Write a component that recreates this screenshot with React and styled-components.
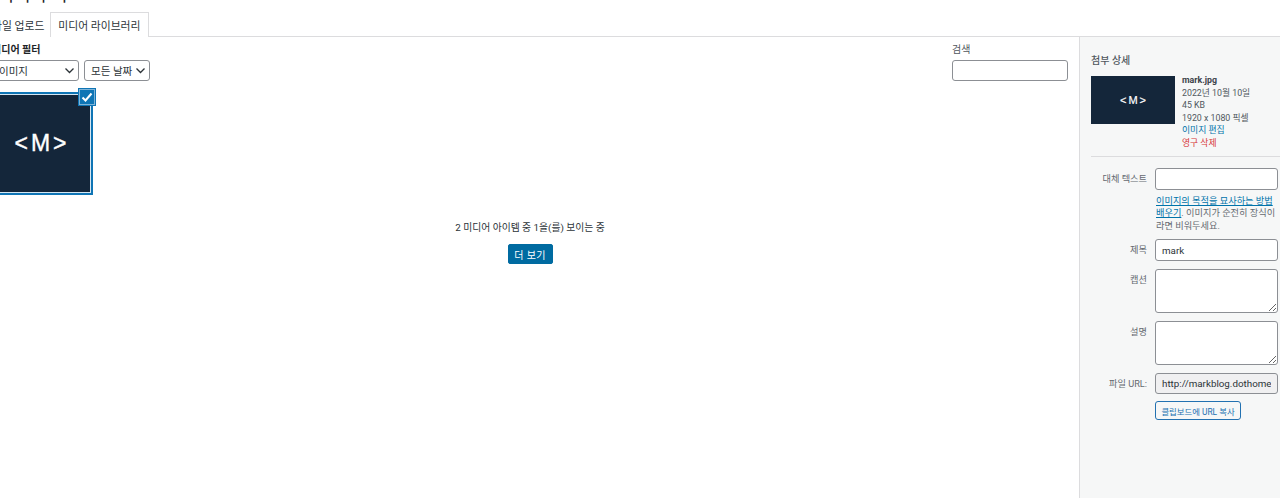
import React from 'react';
import styled, { createGlobalStyle } from 'styled-components';

const GlobalStyle = createGlobalStyle`
  html, body {
    margin: 0;
    height: 100%;
    overflow: hidden;
    background: #fff;
  }
  body {
    font-family: Roboto, "Noto Sans CJK KR", sans-serif;
    font-size: 11px;
    color: #2c3338;
  }
`;

const Page = styled.div`
  width: 1299px;
  height: 498px;
  margin-left: -19px;
  display: flex;
  flex-direction: column;
  overflow: hidden;
`;

const Title = styled.h1`
  margin: -18px 0 0;
  height: 30px;
  font-size: 18px;
  line-height: 26px;
  font-weight: 400;
  color: #1d2327;
`;

const Tabs = styled.div`
  display: flex;
  box-sizing: border-box;
  height: 25px;
  padding-left: 4px;
  border-bottom: 1px solid #dcdcde;
`;

const Tab = styled.div`
  display: flex;
  align-items: center;
  padding: 0 ${(props) => (props.$active ? '7px' : '5px')} 0 ${(props) => (props.$active ? '7px' : '6px')};
  height: 25px;
  box-sizing: border-box;
  font-size: 10.8px;
  color: #2c3338;
  background: #fff;
  border: 1px solid ${(props) => (props.$active ? '#dcdcde' : 'transparent')};
  border-bottom: 0;
`;

const Body = styled.div`
  flex: 1;
  display: flex;
  min-height: 0;
`;

const Browser = styled.main`
  flex: 1;
  min-width: 0;
  display: flex;
  flex-direction: column;
`;

const Toolbar = styled.div`
  display: flex;
  justify-content: space-between;
  padding: 6px 11px 0 11px;
`;

const FilterLabel = styled.div`
  font-size: 10px;
  line-height: 14px;
  font-weight: 700;
  color: #1d2327;
  margin-bottom: 3px;
`;

const SearchLabel = styled(FilterLabel)`
  font-weight: 400;
  color: #50575e;
`;

const FilterRow = styled.div`
  display: flex;
  gap: 5px;
`;

const Select = styled.div`
  display: flex;
  align-items: center;
  justify-content: space-between;
  box-sizing: border-box;
  width: ${(props) => props.$width}px;
  height: 21px;
  padding: 0 3px 0 6px;
  border: 1px solid #8c8f94;
  border-radius: 3px;
  font-size: 10.5px;
  white-space: nowrap;
  color: #2c3338;
  background: #fff;
`;

const SearchInput = styled.input`
  display: block;
  box-sizing: border-box;
  width: 116px;
  height: 21px;
  border: 1px solid #8c8f94;
  border-radius: 3px;
  background: #fff;
  outline: none;
`;

const Grid = styled.div`
  padding: 13px 0 0 0;
  height: 111px;
`;

const Attachment = styled.div`
  position: relative;
  box-sizing: border-box;
  width: 110px;
  height: 99px;
  background: #14263a;
  border: 1px solid #d5e6f2;
  outline: 2px solid #0f75b5;
  display: flex;
  align-items: center;
  justify-content: center;
`;

const Logo = styled.span`
  display: flex;
  align-items: center;
  gap: ${(props) => props.$gap}px;
  padding-left: ${(props) => props.$shift}px;
  color: #fff;
  font-family: "Liberation Sans", Arial, sans-serif;
  font-size: ${(props) => props.$size}px;
  line-height: 1;
`;

const LogoMark = styled.span`
  font-weight: 400;
  -webkit-text-stroke: ${(props) => props.$stroke}px #fff;
`;

const Check = styled.div`
  position: absolute;
  top: -7px;
  right: -6px;
  box-sizing: border-box;
  width: 18px;
  height: 18px;
  display: flex;
  align-items: center;
  justify-content: center;
  background: #0f75b5;
  border: 1px solid #0f75b5;
  box-shadow: inset 0 0 0 1px #7fb4d8;
`;

const LoadMore = styled.div`
  display: flex;
  flex-direction: column;
  align-items: center;
  gap: 9px;
  margin-top: 16px;
`;

const CountText = styled.p`
  margin: 0;
  font-size: 9.8px;
  line-height: 14px;
  color: #2c3338;
`;

const PrimaryButton = styled.button`
  box-sizing: border-box;
  width: 45px;
  height: 20px;
  padding: 0;
  border: 1px solid #006ba1;
  border-radius: 2px;
  background: #006ba1;
  color: #fff;
  font-family: inherit;
  font-size: 10px;
  letter-spacing: 0.3px;
`;

const Sidebar = styled.aside`
  box-sizing: border-box;
  width: 201px;
  background: #f6f7f7;
  border-left: 1px solid #dcdcde;
  padding: 17px 2px 0 11px;
`;

const SideHeading = styled.h2`
  margin: 0 0 8px;
  font-size: 10px;
  line-height: 14px;
  font-weight: 500;
  color: #50575e;
`;

const Details = styled.div`
  display: flex;
  gap: 7px;
  margin-right: -2px;
  padding-bottom: 6px;
  border-bottom: 1px solid #dcdcde;
`;

const Thumb = styled.div`
  width: 84px;
  height: 48px;
  flex: none;
  background: #14263a;
  display: flex;
  align-items: center;
  justify-content: center;
`;

const Info = styled.div`
  margin-top: -2px;
  font-size: 8.8px;
  line-height: 12.6px;
  color: #50575e;
`;

const FileName = styled.div`
  font-weight: 700;
  color: #3c434a;
`;

const InfoLink = styled.div`
  color: ${(props) => (props.$danger ? '#d63638' : '#0073aa')};
`;

const Fields = styled.div`
  display: flex;
  flex-direction: column;
  padding-top: 11px;
`;

const Field = styled.div`
  display: grid;
  grid-template-columns: 56px 123px;
  column-gap: 8px;
  margin-bottom: ${(props) => (props.$tight ? 7 : 8)}px;
`;

const FieldLabel = styled.label`
  text-align: right;
  font-size: 9.2px;
  line-height: 14px;
  padding-top: 4px;
  color: #646970;
`;

const TextInput = styled.input`
  display: block;
  box-sizing: border-box;
  width: 123px;
  height: ${(props) => props.$height || 22}px;
  padding: 0 6px;
  border: 1px solid #8c8f94;
  border-radius: 3px;
  background: ${(props) => (props.$muted ? '#f0f0f1' : '#fff')};
  color: #2c3338;
  font-family: inherit;
  font-size: 9.8px;
  outline: none;
`;

const TextArea = styled.textarea`
  display: block;
  box-sizing: border-box;
  width: 123px;
  height: 44px;
  border: 1px solid #8c8f94;
  border-radius: 3px;
  background: #fff;
  outline: none;
  resize: vertical;
`;

const Help = styled.p`
  grid-column: 2;
  margin: 5px 0 0;
  padding-left: 1px;
  font-size: 9.2px;
  line-height: 12.6px;
  color: #646970;
  word-break: break-all;
  a {
    color: #0073aa;
    text-decoration: underline;
  }
`;

const CopyButton = styled.button`
  grid-column: 2;
  box-sizing: border-box;
  width: 86px;
  height: 19px;
  margin-top: 7px;
  padding: 0;
  border: 1px solid #2271b1;
  border-radius: 3px;
  background: #f6f7f7;
  color: #2271b1;
  font-family: inherit;
  font-size: 8.4px;
  white-space: nowrap;
`;

const Chevron = () => (
  <svg width="11" height="11" viewBox="0 0 11 11" fill="none" stroke="#2c3338" strokeWidth="1.3">
    <path d="M1.5 3.5 L5.5 7.5 L9.5 3.5" />
  </svg>
);

const CheckMark = () => (
  <svg width="12" height="12" viewBox="0 0 12 12" fill="none" stroke="#fff" strokeWidth="2">
    <path d="M1.5 6.5 L4.5 9.5 L10.5 2.5" />
  </svg>
);

export default function App() {
  return (
    <Page>
      <GlobalStyle />
      <Title>미디어 추가</Title>
      <Tabs>
        <Tab>파일 업로드</Tab>
        <Tab $active>미디어 라이브러리</Tab>
      </Tabs>
      <Body>
        <Browser>
          <Toolbar>
            <div>
              <FilterLabel>미디어 필터</FilterLabel>
              <FilterRow>
                <Select $width={87}>
                  이미지
                  <Chevron />
                </Select>
                <Select $width={66}>
                  모든 날짜
                  <Chevron />
                </Select>
              </FilterRow>
            </div>
            <div>
              <SearchLabel>검색</SearchLabel>
              <SearchInput readOnly />
            </div>
          </Toolbar>
          <Grid>
            <Attachment>
              <Logo $size={23} $gap={3} $shift={9}>
                <LogoMark $stroke={0.4}>&lt;</LogoMark>
                <LogoMark $stroke={0.4}>M</LogoMark>
                <LogoMark $stroke={0.4}>&gt;</LogoMark>
              </Logo>
              <Check>
                <CheckMark />
              </Check>
            </Attachment>
          </Grid>
          <LoadMore>
            <CountText>2 미디어 아이템 중 1을(를) 보이는 중</CountText>
            <PrimaryButton>더 보기</PrimaryButton>
          </LoadMore>
        </Browser>
        <Sidebar>
          <SideHeading>첨부 상세</SideHeading>
          <Details>
            <Thumb>
              <Logo $size={11} $gap={2} $shift={0}>
                <LogoMark $stroke={0.2}>&lt;</LogoMark>
                <LogoMark $stroke={0.2}>M</LogoMark>
                <LogoMark $stroke={0.2}>&gt;</LogoMark>
              </Logo>
            </Thumb>
            <Info>
              <FileName>mark.jpg</FileName>
              <div>2022년 10월 10일</div>
              <div>45 KB</div>
              <div>1920 x 1080 픽셀</div>
              <InfoLink>이미지 편집</InfoLink>
              <InfoLink $danger>영구 삭제</InfoLink>
            </Info>
          </Details>
          <Fields>
            <Field $tight>
              <FieldLabel>대체 텍스트</FieldLabel>
              <TextInput readOnly />
              <Help>
                <a>이미지의 목적을 묘사하는 방법 배우기</a>. 이미지가 순전히 장식이라면 비워두세요.
              </Help>
            </Field>
            <Field>
              <FieldLabel>제목</FieldLabel>
              <TextInput readOnly defaultValue="mark" />
            </Field>
            <Field>
              <FieldLabel>캡션</FieldLabel>
              <TextArea readOnly />
            </Field>
            <Field>
              <FieldLabel>설명</FieldLabel>
              <TextArea readOnly />
            </Field>
            <Field>
              <FieldLabel>파일 URL:</FieldLabel>
              <TextInput readOnly $muted $height={21} defaultValue="http://markblog.dothome.co.kr/wp-content/uploads/mark.jpg" />
              <CopyButton>클립보드에 URL 복사</CopyButton>
            </Field>
          </Fields>
        </Sidebar>
      </Body>
    </Page>
  );
}
